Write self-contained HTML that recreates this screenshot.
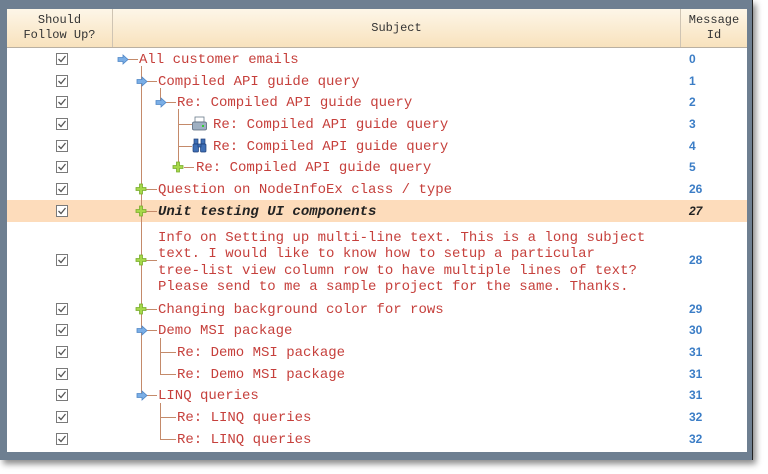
<!DOCTYPE html>
<html><head><style>
body{margin:0;width:768px;height:474px;background:#fff;position:relative;overflow:hidden;font-family:"Liberation Mono",monospace;}
.frame{position:absolute;left:0;top:0;width:752px;height:460px;background:#6e7f91;box-shadow:3px 4px 6px rgba(0,0,0,.45);border-right:1px solid #222;}
.inner{position:absolute;left:7px;top:9px;width:740px;height:443px;background:#fff;}
.hdr{position:absolute;left:7px;top:9px;width:740px;height:38px;background:linear-gradient(#fdf6e8,#f8e2bd);border-bottom:1px solid #b9b0a2;}
.hc{position:absolute;top:9px;height:38px;display:flex;align-items:center;justify-content:center;text-align:center;font-size:12px;line-height:15px;color:#333;}
.div{position:absolute;top:9px;width:1px;height:38px;background:#cfc4b3;}
.t{position:absolute;font-size:14px;line-height:16px;color:#c6403c;white-space:pre;}
.id{position:absolute;left:689px;font:bold 12px "Liberation Sans",sans-serif;color:#3b7dc6;}
.cb{position:absolute;left:56px;width:12px;height:12px;}
.vl{position:absolute;width:1px;background:#c48a6a;}
</style></head><body>
<div class="frame"></div>
<div class="inner"></div>
<div style="position:absolute;left:7px;top:200px;width:740px;height:22px;background:#fddcbb"></div>
<div class="hdr"></div>
<div class="hc" style="left:7px;width:105px">Should<br>Follow Up?</div>
<div class="hc" style="left:113px;width:567px">Subject</div>
<div class="hc" style="left:681px;width:66px">Message<br>Id</div>
<div class="div" style="left:112px"></div>
<div class="div" style="left:680px"></div>

<div class="vl" style="left:141px;top:66px;height:330px"></div>
<div class="vl" style="left:160px;top:88px;height:14px"></div>
<div class="vl" style="left:178px;top:109px;height:58px"></div>
<div class="vl" style="left:160px;top:338px;height:36px"></div>
<div class="vl" style="left:160px;top:403px;height:36px"></div>

<svg width="768" height="474" style="position:absolute;left:0;top:0">
<defs>
<g id="a"><path d="M0 2.5H5V0L10 4.5L5 9V6.5H0Z" fill="#7aaee6" stroke="#4f86c6" stroke-width=".8"/></g>
<g id="p"><path d="M3.5 0H6.5V3.5H10V6.5H6.5V10H3.5V6.5H0V3.5H3.5Z" fill="#a6d84a" stroke="#78ac2c" stroke-width=".8"/></g>
<g id="c"><rect x="0.5" y="0.5" width="11" height="11" fill="#fff" stroke="#7a7a7a"/><path d="M2.5 6L5 8.5L9.5 3" fill="none" stroke="#555" stroke-width="1.3"/></g>
</defs>
<g stroke="#c48a6a" stroke-width="1">
<line x1="128" y1="59.5" x2="138" y2="59.5"/>
<line x1="147" y1="81.5" x2="157" y2="81.5"/>
<line x1="166" y1="102.5" x2="176" y2="102.5"/>
<line x1="178" y1="124.5" x2="192" y2="124.5"/>
<line x1="178" y1="146.5" x2="192" y2="146.5"/>
<line x1="184" y1="167.5" x2="194" y2="167.5"/>
<line x1="146" y1="189.5" x2="157" y2="189.5"/>
<line x1="146" y1="211.5" x2="157" y2="211.5"/>
<line x1="146" y1="260.5" x2="157" y2="260.5"/>
<line x1="146" y1="309.5" x2="157" y2="309.5"/>
<line x1="147" y1="330.5" x2="157" y2="330.5"/>
<line x1="160" y1="352.5" x2="176" y2="352.5"/>
<line x1="160" y1="374.5" x2="176" y2="374.5"/>
<line x1="147" y1="395.5" x2="157" y2="395.5"/>
<line x1="160" y1="417.5" x2="176" y2="417.5"/>
<line x1="160" y1="439.5" x2="176" y2="439.5"/>
</g>
<use href="#a" x="118" y="55"/>
<use href="#a" x="137" y="77"/>
<use href="#a" x="156" y="98"/>
<use href="#p" x="173" y="162"/>
<use href="#p" x="136" y="184"/>
<use href="#p" x="136" y="206"/>
<use href="#p" x="136" y="255"/>
<use href="#p" x="136" y="304"/>
<use href="#a" x="137" y="326"/>
<use href="#a" x="137" y="391"/>
<g transform="translate(192,117)"><rect x="3" y="0" width="9" height="5" fill="#fff" stroke="#6a7a8a" stroke-width=".8"/><rect x="0.5" y="5" width="14" height="8" rx="1.5" fill="#9fb0c2" stroke="#55667a" stroke-width=".8"/><rect x="10" y="8" width="2" height="2" fill="#3c3"/></g>
<g transform="translate(193,139)" fill="#3f6fb5" stroke="#1e3f78" stroke-width=".7"><rect x="1" y="0" width="4" height="5"/><rect x="8" y="0" width="4" height="5"/><rect x="0" y="5" width="5.5" height="8" rx="1"/><rect x="7.5" y="5" width="5.5" height="8" rx="1"/><rect x="5" y="5" width="3" height="3"/></g>
<use href="#c" x="56" y="53"/>
<use href="#c" x="56" y="75"/>
<use href="#c" x="56" y="96"/>
<use href="#c" x="56" y="118"/>
<use href="#c" x="56" y="140"/>
<use href="#c" x="56" y="161"/>
<use href="#c" x="56" y="183"/>
<use href="#c" x="56" y="205"/>
<use href="#c" x="56" y="254"/>
<use href="#c" x="56" y="303"/>
<use href="#c" x="56" y="324"/>
<use href="#c" x="56" y="346"/>
<use href="#c" x="56" y="368"/>
<use href="#c" x="56" y="389"/>
<use href="#c" x="56" y="411"/>
<use href="#c" x="56" y="433"/>
</svg>

<div class="t" style="left:139px;top:52px">All customer emails</div>
<div class="t" style="left:158px;top:74px">Compiled API guide query</div>
<div class="t" style="left:177px;top:95px">Re: Compiled API guide query</div>
<div class="t" style="left:213px;top:117px">Re: Compiled API guide query</div>
<div class="t" style="left:213px;top:139px">Re: Compiled API guide query</div>
<div class="t" style="left:196px;top:160px">Re: Compiled API guide query</div>
<div class="t" style="left:158px;top:182px">Question on NodeInfoEx class / type</div>
<div class="t" style="left:158px;top:204px;color:#222;font-weight:bold;font-style:italic">Unit testing UI components</div>
<div class="t" style="left:158px;top:230px;line-height:16.3px">Info on Setting up multi-line text. This is a long subject
text. I would like to know how to setup a particular
tree-list view column row to have multiple lines of text?
Please send to me a sample project for the same. Thanks.</div>
<div class="t" style="left:158px;top:302px">Changing background color for rows</div>
<div class="t" style="left:158px;top:323px">Demo MSI package</div>
<div class="t" style="left:177px;top:345px">Re: Demo MSI package</div>
<div class="t" style="left:177px;top:367px">Re: Demo MSI package</div>
<div class="t" style="left:158px;top:388px">LINQ queries</div>
<div class="t" style="left:177px;top:410px">Re: LINQ queries</div>
<div class="t" style="left:177px;top:432px">Re: LINQ queries</div>

<div class="id" style="top:52px">0</div>
<div class="id" style="top:74px">1</div>
<div class="id" style="top:95px">2</div>
<div class="id" style="top:117px">3</div>
<div class="id" style="top:139px">4</div>
<div class="id" style="top:160px">5</div>
<div class="id" style="top:182px">26</div>
<div class="id" style="top:204px;color:#222;font-style:italic">27</div>
<div class="id" style="top:253px">28</div>
<div class="id" style="top:302px">29</div>
<div class="id" style="top:323px">30</div>
<div class="id" style="top:345px">31</div>
<div class="id" style="top:367px">31</div>
<div class="id" style="top:388px">31</div>
<div class="id" style="top:410px">32</div>
<div class="id" style="top:432px">32</div>
</body></html>
